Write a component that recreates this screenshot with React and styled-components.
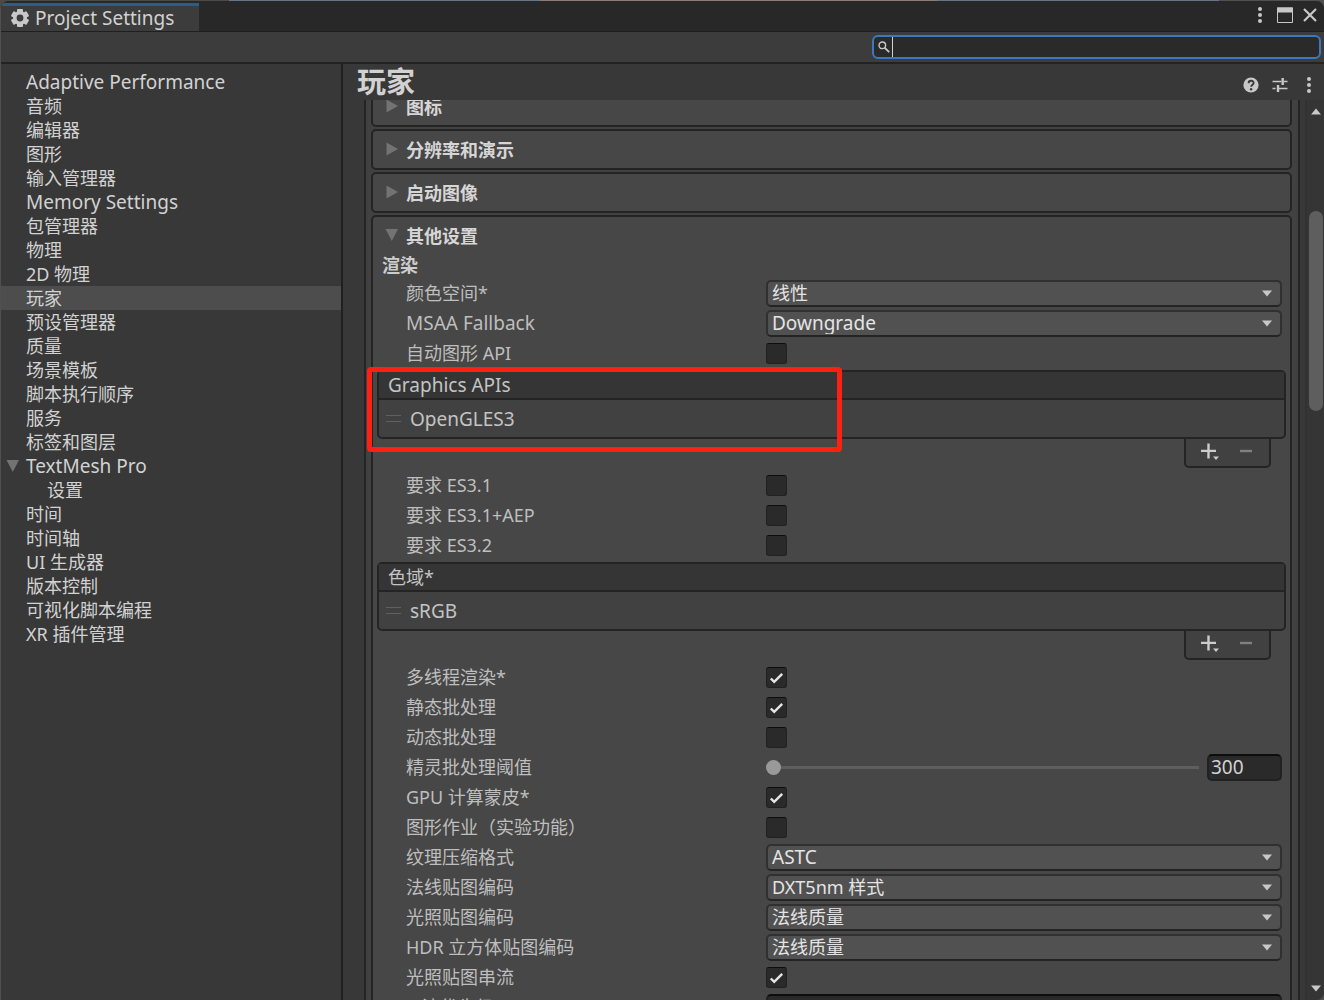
import { useLayoutEffect, useRef, useState } from 'react';
import styled, { createGlobalStyle } from 'styled-components';

const categories = [
  { name: 'Adaptive Performance' },
  { name: '音频' },
  { name: '编辑器' },
  { name: '图形' },
  { name: '输入管理器' },
  { name: 'Memory Settings' },
  { name: '包管理器' },
  { name: '物理' },
  { name: '2D 物理' },
  { name: '玩家' },
  { name: '预设管理器' },
  { name: '质量' },
  { name: '场景模板' },
  { name: '脚本执行顺序' },
  { name: '服务' },
  { name: '标签和图层' },
  { name: 'TextMesh Pro', open: true },
  { name: '设置', child: true },
  { name: '时间' },
  { name: '时间轴' },
  { name: 'UI 生成器' },
  { name: '版本控制' },
  { name: '可视化脚本编程' },
  { name: 'XR 插件管理' },
];

// purely latin strings are set one pixel larger than chinese ones
const isLatin = (text) => /^[\x20-\x7e]+$/.test(text);
const textSize = (props) => (props.$latin ? '19px' : '18px');

const DotsIcon = () => (
  <svg width="6" height="18" viewBox="0 0 6 18" fill="currentColor">
    <circle cx="3" cy="3" r="2" />
    <circle cx="3" cy="9" r="2" />
    <circle cx="3" cy="15" r="2" />
  </svg>
);

const GearIcon = () => (
  <svg width="20" height="20" viewBox="0 0 20 20">
    <g fill="#c8c8c8">
      {[0, 60, 120].map((deg) => (
        <rect
          key={deg}
          x="7"
          y="1"
          width="6"
          height="18"
          rx="1"
          transform={`rotate(${deg} 10 10)`}
        />
      ))}
      <circle cx="10" cy="10" r="7" />
    </g>
    <circle cx="10" cy="10" r="3.4" fill="#3c3c3c" />
  </svg>
);

const ArrowDown = () => (
  <svg width="10" height="7" viewBox="0 0 10 7">
    <path d="M0 0.5h10L5 6.5z" fill="#c8c8c8" />
  </svg>
);

const Foldout = ({ open }) => (
  <svg width="14" height="14" viewBox="0 0 14 14">
    <path d={open ? 'M0.5 1h12.5L6.8 13z' : 'M1.5 0.5v13L13 7z'} fill="#737373" />
  </svg>
);

function Group({ title, open, children }) {
  return (
    <GroupBox>
      <GroupHead type="button" aria-expanded={!!open}>
        <Foldout open={open} />
        {title}
      </GroupHead>
      {children}
    </GroupBox>
  );
}

function CheckRow({ id, label, checked }) {
  const [on, setOn] = useState(!!checked);

  return (
    <Row>
      <RowLabel htmlFor={id}>{label}</RowLabel>
      <CheckWrap>
        <CheckBox
          id={id}
          type="checkbox"
          checked={on}
          onChange={() => setOn(!on)}
        />
        {on && (
          <CheckMark width="21" height="21" viewBox="0 0 21 21">
            <path
              d="M4.8 11.5l3.4 3.4 8-8"
              fill="none"
              stroke="#e6e6e6"
              strokeWidth="2.4"
            />
          </CheckMark>
        )}
      </CheckWrap>
    </Row>
  );
}

function SelectRow({ id, label, value }) {
  return (
    <Row>
      <RowLabel htmlFor={id} $latin={isLatin(label)}>
        {label}
      </RowLabel>
      <SelectWrap>
        <Select id={id} $latin={isLatin(value)}>
          <option>{value}</option>
        </Select>
        <SelectArrow>
          <ArrowDown />
        </SelectArrow>
      </SelectWrap>
    </Row>
  );
}

function ReorderList({ title, item, marked }) {
  return (
    <ListWrap>
      <ListBox>
        <ListHead $latin={isLatin(title)}>{title}</ListHead>
        <ListItem>
          <Handle />
          {item}
        </ListItem>
      </ListBox>
      <ListFooter>
        <ListButton type="button" aria-label={`${title} +`}>
          <svg width="20" height="20" viewBox="0 0 20 20">
            <path d="M8.5 2.5v15M1 9.9h15" stroke="#cccccc" strokeWidth="2.4" />
            <path d="M13 15.5h6l-3 3.5z" fill="#cccccc" />
          </svg>
        </ListButton>
        <ListButton type="button" aria-label={`${title} -`}>
          <svg width="14" height="20" viewBox="0 0 14 20">
            <path d="M1 10h12" stroke="#808080" strokeWidth="2.4" />
          </svg>
        </ListButton>
      </ListFooter>
      {marked && <Marker />}
    </ListWrap>
  );
}

function SliderRow() {
  const [value, setValue] = useState(300);
  const change = (e) => setValue(e.target.value);

  return (
    <Row>
      <RowLabel htmlFor="sprite">精灵批处理阈值</RowLabel>
      <SliderWrap>
        <Slider
          id="sprite"
          type="range"
          min="300"
          max="8000"
          value={value}
          onChange={change}
        />
        <NumberField
          aria-label="精灵批处理阈值"
          value={value}
          onChange={change}
        />
      </SliderWrap>
    </Row>
  );
}

export default function App() {
  const scroller = useRef(null);

  useLayoutEffect(() => {
    scroller.current.scrollTop = 14;
  }, []);

  return (
    <Desktop>
      <GlobalStyle />
      <Window>
        <TitleBar>
          <Tab>
            <GearIcon />
            Project Settings
          </Tab>
          <WindowButtons>
            <IconButton type="button" aria-label="菜单">
              <DotsIcon />
            </IconButton>
            <IconButton type="button" aria-label="最大化">
              <svg width="16" height="16" viewBox="0 0 16 16">
                <path d="M0.5 1h15v14.5h-15z" fill="none" stroke="#c8c8c8" />
                <path d="M0 0.5h16v5H0z" fill="#c8c8c8" />
              </svg>
            </IconButton>
            <IconButton type="button" aria-label="关闭">
              <svg width="14" height="14" viewBox="0 0 14 14">
                <path
                  d="M1 1l12 12M13 1L1 13"
                  stroke="#c8c8c8"
                  strokeWidth="2.2"
                />
              </svg>
            </IconButton>
          </WindowButtons>
        </TitleBar>

        <Toolbar>
          <Search>
            <svg width="12" height="12" viewBox="0 0 12 12">
              <circle
                cx="4.3"
                cy="4.3"
                r="3.3"
                fill="none"
                stroke="#c8c8c8"
                strokeWidth="1.4"
              />
              <path d="M6.8 6.8l4.4 4.4" stroke="#c8c8c8" strokeWidth="1.8" />
            </svg>
            <Caret />
            <SearchInput type="text" aria-label="搜索" />
          </Search>
        </Toolbar>

        <Body>
          <Sidebar>
            {categories.map((item) => (
              <Category
                key={item.name}
                href="#"
                $selected={item.name === '玩家'}
                $child={item.child}
                $latin={isLatin(item.name)}
              >
                <CategoryFold>{item.open && <Foldout open />}</CategoryFold>
                {item.name}
              </Category>
            ))}
          </Sidebar>

          <Main>
            <MainHead>
              <Title>玩家</Title>
              <HeadButtons>
                <IconButton type="button" aria-label="帮助">
                  <svg width="16" height="16" viewBox="0 0 16 16">
                    <circle cx="8" cy="8" r="7.6" fill="#c8c8c8" />
                    <path
                      d="M5.6 6.2c0-3.2 5-3.1 5-.3 0 1.8-2.4 1.8-2.4 3.9"
                      fill="none"
                      stroke="#383838"
                      strokeWidth="1.9"
                    />
                    <circle cx="8.1" cy="12.2" r="1.2" fill="#383838" />
                  </svg>
                </IconButton>
                <IconButton type="button" aria-label="预设">
                  <svg width="16" height="16" viewBox="0 0 16 16">
                    <path
                      d="M0.5 4.5h9M12 4.5h3.500M0.5 11.5h3M7 11.5h8.5"
                      stroke="#c8c8c8"
                      strokeWidth="1.4"
                    />
                    <path
                      d="M10.7 1v7M6 8v7"
                      stroke="#c8c8c8"
                      strokeWidth="2.4"
                    />
                  </svg>
                </IconButton>
                <IconButton type="button" aria-label="更多">
                  <DotsIcon />
                </IconButton>
              </HeadButtons>
            </MainHead>

            <ScrollRow>
              <Scroller ref={scroller}>
                <Frame>
                  <Group title="图标" />
                  <Group title="分辨率和演示" />
                  <Group title="启动图像" />
                  <Group title="其他设置" open>
                    <SubTitle>渲染</SubTitle>
                    <SelectRow id="space" label="颜色空间*" value="线性" />
                    <SelectRow
                      id="msaa"
                      label="MSAA Fallback"
                      value="Downgrade"
                    />
                    <CheckRow id="autoapi" label="自动图形 API" />
                    <ReorderList title="Graphics APIs" item="OpenGLES3" marked />
                    <CheckRow id="es31" label="要求 ES3.1" />
                    <CheckRow id="es31aep" label="要求 ES3.1+AEP" />
                    <CheckRow id="es32" label="要求 ES3.2" />
                    <ReorderList title="色域*" item="sRGB" />
                    <CheckRow id="mt" label="多线程渲染*" checked />
                    <CheckRow id="static" label="静态批处理" checked />
                    <CheckRow id="dynamic" label="动态批处理" />
                    <SliderRow />
                    <CheckRow id="skin" label="GPU 计算蒙皮*" checked />
                    <CheckRow id="jobs" label="图形作业（实验功能）" />
                    <SelectRow id="texture" label="纹理压缩格式" value="ASTC" />
                    <SelectRow
                      id="normal"
                      label="法线贴图编码"
                      value="DXT5nm 样式"
                    />
                    <SelectRow
                      id="lightmap"
                      label="光照贴图编码"
                      value="法线质量"
                    />
                    <SelectRow
                      id="hdr"
                      label="HDR 立方体贴图编码"
                      value="法线质量"
                    />
                    <CheckRow id="stream" label="光照贴图串流" checked />
                    <Row>
                      <RowLabel htmlFor="priority" $nested>
                        流优先级
                      </RowLabel>
                      <TextField id="priority" defaultValue="0" />
                    </Row>
                  </Group>
                </Frame>
              </Scroller>
              <ScrollBar>
                <svg width="10" height="7" viewBox="0 0 10 7">
                  <path d="M0 6.5h10L5 0.5z" fill="#c8c8c8" />
                </svg>
                <ScrollTrack>
                  <ScrollThumb />
                </ScrollTrack>
                <ArrowDown />
              </ScrollBar>
            </ScrollRow>
          </Main>
        </Body>
      </Window>
    </Desktop>
  );
}

const GlobalStyle = createGlobalStyle`
  * {
    box-sizing: border-box;
  }
  body {
    margin: 0;
    overflow: hidden;
    color: #d2d2d2;
    font-family: 'Noto Sans', 'Noto Sans CJK SC', sans-serif;
    font-size: 18px;
  }
  button, input, select {
    font: inherit;
    color: inherit;
    margin: 0;
  }
  svg {
    display: block;
    flex: none;
  }
`;

/* sliver of the editor that shows round the floating window */
const Desktop = styled.div`
  height: 100vh;
  padding: 1px 0 0 1px;
  background: linear-gradient(
      90deg,
      #4a4a46 229px,
      #66758a 229px,
      #66758a 540px,
      #8f7a74 540px,
      #8f7a74 937px,
      #66758a 937px,
      #66758a 1219px,
      #505050 1219px
    )
    top / 100% 8px no-repeat #505050;
`;

const Window = styled.div`
  height: 100%;
  display: flex;
  flex-direction: column;
  overflow: hidden;
  border-radius: 8px 8px 8px 0;
  background: #383838;
`;

const TitleBar = styled.header`
  display: flex;
  justify-content: space-between;
  height: 31px;
  padding-top: 2px;
  flex: none;
  background: #282828;
  border-bottom: 1px solid #1f1f1f;
`;

const Tab = styled.div`
  display: flex;
  align-items: center;
  gap: 5px;
  width: 198px;
  padding: 0 9px 2px;
  font-size: 19px;
  line-height: 22px;
  white-space: nowrap;
  color: #d2d2d2;
  background: #3c3c3c;
  border-top: 3px solid #2c5d87;
`;

const WindowButtons = styled.div`
  display: flex;
  align-items: center;
  gap: 9px;
  padding: 0 6px 4px 0;
`;

const IconButton = styled.button`
  display: flex;
  align-items: center;
  justify-content: center;
  min-width: 16px;
  height: 20px;
  padding: 0;
  border: 0;
  background: none;
  color: #c8c8c8;
`;

const Toolbar = styled.div`
  display: flex;
  justify-content: flex-end;
  align-items: center;
  height: 32px;
  flex: none;
  padding: 0 3px 0 0;
  background: #3c3c3c;
  border-bottom: 2px solid #232323;
`;

const Search = styled.div`
  display: flex;
  align-items: center;
  width: 34%;
  height: 24px;
  padding-left: 4px;
  border: 2px solid #3a79bb;
  border-radius: 6px;
  background: #2a2a2a;
`;

const Caret = styled.span`
  width: 1px;
  height: 20px;
  margin-left: 2px;
  background: #d2d2d2;
`;

const SearchInput = styled.input`
  flex: 1;
  min-width: 0;
  height: 20px;
  padding: 0;
  border: 0;
  outline: 0;
  background: none;
`;

const Body = styled.div`
  display: flex;
  flex: 1;
  min-height: 0;
`;

const Sidebar = styled.nav`
  width: 342px;
  flex: none;
  padding-top: 6px;
  border-right: 2px solid #202020;
`;

const Category = styled.a`
  display: flex;
  align-items: center;
  height: 24px;
  padding-left: ${(props) => (props.$child ? '26px' : '5px')};
  font-size: ${textSize};
  line-height: 24px;
  white-space: nowrap;
  color: inherit;
  text-decoration: none;
  background: ${(props) => (props.$selected ? '#4d4d4d' : 'none')};
`;

const CategoryFold = styled.span`
  width: 20px;
`;

const Main = styled.main`
  display: flex;
  flex-direction: column;
  flex: 1;
  min-width: 0;
`;

const MainHead = styled.div`
  display: flex;
  justify-content: space-between;
  align-items: center;
  height: 36px;
  flex: none;
  padding: 0 7px 0 14px;
`;

const Title = styled.h1`
  margin: 0;
  font-size: 29px;
  line-height: 38px;
`;

const HeadButtons = styled.div`
  display: flex;
  align-items: center;
  gap: 13px;
  padding-top: 6px;
`;

const ScrollRow = styled.div`
  display: flex;
  flex: 1;
  min-height: 0;
`;

const Scroller = styled.div`
  flex: 1;
  min-width: 0;
  padding: 0 5px 0 21px;
  overflow: hidden auto;
  scrollbar-width: none;
`;

const Frame = styled.div`
  display: flex;
  flex-direction: column;
  gap: 2px;
  padding: 0 6px 20px 5px;
  background: #414141;
  border: solid #242424;
  border-width: 0 2px;
`;

const GroupBox = styled.section`
  padding-bottom: 1px;
  background: #474747;
  border: 2px solid #242424;
  border-radius: 5px;
`;

const GroupHead = styled.button`
  display: flex;
  align-items: center;
  gap: 7px;
  width: 100%;
  height: 36px;
  padding: 0 13px 0 12px;
  border: 0;
  background: none;
  color: #d6d6d6;
  font-weight: 700;
  text-align: left;
`;

const SubTitle = styled.h2`
  margin: 0;
  padding-left: 9px;
  font-size: 18px;
  line-height: 25px;
  color: #cccccc;
`;

const Row = styled.div`
  display: flex;
  align-items: center;
  height: 30px;
  padding: 0 8px 0 33px;
`;

const RowLabel = styled.label`
  width: 360px;
  flex: none;
  padding-left: ${(props) => (props.$nested ? '16px' : '0')};
  font-size: ${textSize};
  line-height: 30px;
  white-space: nowrap;
  color: #bebebe;
`;

const SelectWrap = styled.div`
  position: relative;
  flex: 1;
  min-width: 0;
`;

const Select = styled.select`
  display: block;
  appearance: none;
  width: 100%;
  height: 27px;
  padding: 0 24px 0 4px;
  font-size: ${textSize};
  line-height: 22px;
  color: #e4e4e4;
  background: #515151;
  border: 2px solid #303030;
  border-bottom-color: #242424;
  border-radius: 5px;
`;

const SelectArrow = styled.span`
  position: absolute;
  top: 10px;
  right: 10px;
  pointer-events: none;
`;

const CheckWrap = styled.div`
  position: relative;
  width: 21px;
  height: 21px;
`;

const CheckBox = styled.input`
  display: block;
  appearance: none;
  width: 21px;
  height: 21px;
  background: #2a2a2a;
  border: 1px solid #212121;
  border-top-color: #0d0d0d;
  border-radius: 3px;
`;

const CheckMark = styled.svg`
  position: absolute;
  top: 0;
  left: 0;
  pointer-events: none;
`;

const SliderWrap = styled.div`
  display: flex;
  align-items: center;
  gap: 8px;
  flex: 1;
  min-width: 0;
`;

const Slider = styled.input`
  appearance: none;
  flex: 1;
  min-width: 0;
  height: 15px;
  background: linear-gradient(#5e5e5e, #5e5e5e) center / 100% 3px no-repeat;

  &::-webkit-slider-thumb {
    appearance: none;
    width: 15px;
    height: 15px;
    border-radius: 50%;
    background: #999999;
  }
`;

const TextField = styled.input`
  flex: 1;
  min-width: 0;
  height: 27px;
  padding: 0 2px;
  font-size: 19px;
  color: #d2d2d2;
  background: #2a2a2a;
  border: 2px solid #212121;
  border-top-color: #0d0d0d;
  border-radius: 5px;
`;

const NumberField = styled(TextField)`
  flex: none;
  width: 75px;
`;

const ListWrap = styled.div`
  position: relative;
  padding: 2px 4px;
`;

const ListBox = styled.div`
  background: #414141;
  border: 2px solid #242424;
  border-radius: 5px;
  color: #c4c4c4;
`;

const ListHead = styled.div`
  height: 28px;
  padding-left: 9px;
  font-size: ${textSize};
  line-height: 26px;
  background: #353535;
  border-bottom: 2px solid #242424;
`;

const ListItem = styled.div`
  display: flex;
  align-items: center;
  gap: 9px;
  height: 37px;
  padding-left: 7px;
  font-size: 19px;
`;

const Handle = styled.span`
  width: 15px;
  height: 7px;
  border: solid #606060;
  border-width: 1px 0;
`;

const ListFooter = styled.div`
  display: flex;
  align-items: center;
  justify-content: space-between;
  width: 87px;
  height: 29px;
  margin: 0 15px 0 auto;
  padding: 0 16px 4px 14px;
  background: #414141;
  border: 2px solid #242424;
  border-top: 0;
  border-radius: 0 0 5px 5px;
`;

const ListButton = styled.button`
  padding: 0;
  border: 0;
  background: none;
`;

/* red highlight laid over the list */
const Marker = styled.div`
  position: absolute;
  top: -1px;
  left: -6px;
  width: 475px;
  height: 85px;
  border: 5px solid #ff2012;
  border-radius: 4px;
  pointer-events: none;
`;

const ScrollBar = styled.div`
  display: flex;
  flex-direction: column;
  align-items: center;
  gap: 8px;
  width: 19px;
  flex: none;
  padding: 8px 0;
  background: #353535;
  border-left: 2px solid #323232;
`;

const ScrollTrack = styled.div`
  flex: 1;
  width: 14px;
  padding-top: 88px;
`;

const ScrollThumb = styled.div`
  height: 200px;
  border-radius: 7px;
  background: #5e5e5e;
`;
